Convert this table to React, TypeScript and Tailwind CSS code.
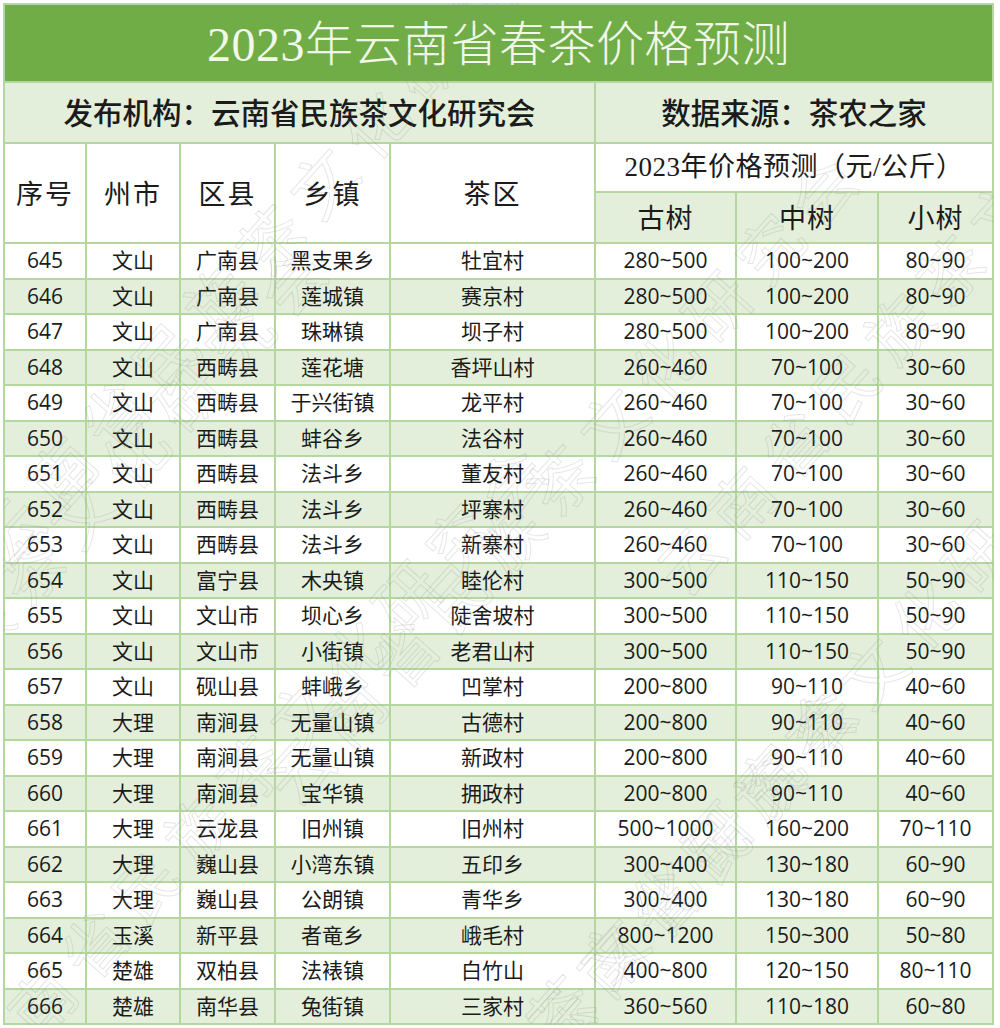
import React from "react";

type Row = [string, string, string, string, string, string, string, string];

const rows: Row[] = [
  ["645", "文山", "广南县", "黑支果乡", "牡宜村", "280~500", "100~200", "80~90"],
  ["646", "文山", "广南县", "莲城镇", "赛京村", "280~500", "100~200", "80~90"],
  ["647", "文山", "广南县", "珠琳镇", "坝子村", "280~500", "100~200", "80~90"],
  ["648", "文山", "西畴县", "莲花塘", "香坪山村", "260~460", "70~100", "30~60"],
  ["649", "文山", "西畴县", "于兴街镇", "龙平村", "260~460", "70~100", "30~60"],
  ["650", "文山", "西畴县", "蚌谷乡", "法谷村", "260~460", "70~100", "30~60"],
  ["651", "文山", "西畴县", "法斗乡", "董友村", "260~460", "70~100", "30~60"],
  ["652", "文山", "西畴县", "法斗乡", "坪寨村", "260~460", "70~100", "30~60"],
  ["653", "文山", "西畴县", "法斗乡", "新寨村", "260~460", "70~100", "30~60"],
  ["654", "文山", "富宁县", "木央镇", "睦伦村", "300~500", "110~150", "50~90"],
  ["655", "文山", "文山市", "坝心乡", "陡舍坡村", "300~500", "110~150", "50~90"],
  ["656", "文山", "文山市", "小街镇", "老君山村", "300~500", "110~150", "50~90"],
  ["657", "文山", "砚山县", "蚌峨乡", "凹掌村", "200~800", "90~110", "40~60"],
  ["658", "大理", "南涧县", "无量山镇", "古德村", "200~800", "90~110", "40~60"],
  ["659", "大理", "南涧县", "无量山镇", "新政村", "200~800", "90~110", "40~60"],
  ["660", "大理", "南涧县", "宝华镇", "拥政村", "200~800", "90~110", "40~60"],
  ["661", "大理", "云龙县", "旧州镇", "旧州村", "500~1000", "160~200", "70~110"],
  ["662", "大理", "巍山县", "小湾东镇", "五印乡", "300~400", "130~180", "60~90"],
  ["663", "大理", "巍山县", "公朗镇", "青华乡", "300~400", "130~180", "60~90"],
  ["664", "玉溪", "新平县", "者竜乡", "峨毛村", "800~1200", "150~300", "50~80"],
  ["665", "楚雄", "双柏县", "法裱镇", "白竹山", "400~800", "120~150", "80~110"],
  ["666", "楚雄", "南华县", "兔街镇", "三家村", "360~560", "110~180", "60~80"],
];

const WM = "云南省民族茶文化研究会";

const marks = [
  { left: 270, top: 230 },
  { left: 560, top: 470 },
  { left: 820, top: 720 },
  { left: 250, top: 760 },
  { left: 950, top: 260 },
  { left: 30, top: 560 },
  { left: 560, top: 1000 },
];

export default function App() {
  return (
    <div className="w-[1000px] h-[1028px] bg-white relative overflow-hidden">
      <div className="absolute left-0 top-0 pl-[3px] pt-[3px]">
        <div className="relative bg-[#b3d79e] p-[2px] grid gap-[2px] grid-cols-[80px_92px_93px_113px_203px_139px_140px_113px] grid-rows-[76px_59px_47px_49px_repeat(22,33.5px)] font-['Open_Sans','Noto_Sans_CJK_SC',sans-serif] text-[#1b1b1b]">
          <div className="col-span-8 bg-[#70ad47] flex items-center justify-center pt-[4px] text-[#f1f8ea] text-[48px] leading-none font-['Liberation_Serif','Noto_Sans_CJK_SC',serif] font-light tracking-[0.5px]">
            2023年云南省春茶价格预测
          </div>
          <div className="col-span-5 bg-[#e3efda] flex items-center justify-center text-[29.5px] font-medium font-['Noto_Sans_CJK_SC',sans-serif] pb-[2px]">
            发布机构：云南省民族茶文化研究会
          </div>
          <div className="col-span-3 bg-[#e3efda] flex items-center justify-center text-[29.5px] font-medium font-['Noto_Sans_CJK_SC',sans-serif] pb-[2px]">
            数据来源：茶农之家
          </div>
          {["序号", "州市", "区县", "乡镇", "茶区"].map((h) => (
            <div
              key={h}
              className="row-span-2 bg-white flex items-center justify-center text-[27px] font-['Noto_Sans_CJK_SC',sans-serif] tracking-[2px]"
            >
              {h}
            </div>
          ))}
          <div className="col-span-3 bg-white flex items-center justify-center text-[27px] tracking-[0.5px] font-['Liberation_Serif','Noto_Sans_CJK_SC',serif]">
            2023年价格预测（元/公斤）
          </div>
          {["古树", "中树", "小树"].map((h) => (
            <div
              key={h}
              className="bg-[#e3efda] flex items-center justify-center text-[27px] font-['Noto_Sans_CJK_SC',sans-serif] tracking-[1px]"
            >
              {h}
            </div>
          ))}
          {rows.map((r, i) =>
            r.map((c, j) => (
              <div
                key={`${i}-${j}`}
                className={
                  (i % 2 === 0 ? "bg-white" : "bg-[#e3efda]") +
                  " flex items-center justify-center text-[21px] leading-none"
                }
              >
                {c}
              </div>
            ))
          )}
          <div className="pointer-events-none absolute inset-0 overflow-hidden">
            {marks.map((m, k) => (
              <div
                key={k}
                className="absolute whitespace-nowrap -translate-x-1/2 -translate-y-1/2 -rotate-[48deg] text-[64px] leading-none tracking-[14px] text-transparent [-webkit-text-stroke:1px_rgba(140,140,140,0.22)] font-['Noto_Sans_CJK_SC',sans-serif]"
                style={{ left: m.left, top: m.top }}
              >
                {WM}
              </div>
            ))}
          </div>
        </div>
      </div>
    </div>
  );
}
